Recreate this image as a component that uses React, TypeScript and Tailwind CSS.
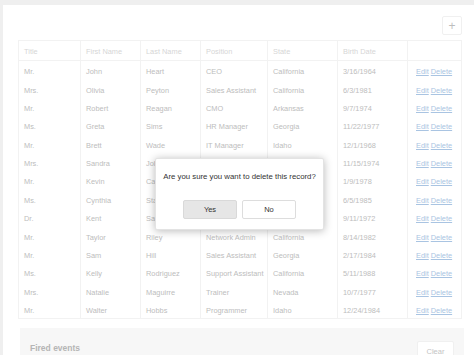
import {useState} from "react";

type Employee = {
  title: string;
  firstName: string;
  lastName: string;
  position: string;
  state: string;
  birthDate: string;
};

const employees: Employee[] = [
  {title: "Mr.", firstName: "John", lastName: "Heart", position: "CEO", state: "California", birthDate: "3/16/1964"},
  {title: "Mrs.", firstName: "Olivia", lastName: "Peyton", position: "Sales Assistant", state: "California", birthDate: "6/3/1981"},
  {title: "Mr.", firstName: "Robert", lastName: "Reagan", position: "CMO", state: "Arkansas", birthDate: "9/7/1974"},
  {title: "Ms.", firstName: "Greta", lastName: "Sims", position: "HR Manager", state: "Georgia", birthDate: "11/22/1977"},
  {title: "Mr.", firstName: "Brett", lastName: "Wade", position: "IT Manager", state: "Idaho", birthDate: "12/1/1968"},
  {title: "Mrs.", firstName: "Sandra", lastName: "Johnson", position: "Controller", state: "Utah", birthDate: "11/15/1974"},
  {title: "Mr.", firstName: "Kevin", lastName: "Carter", position: "Shipping Manager", state: "California", birthDate: "1/9/1978"},
  {title: "Ms.", firstName: "Cynthia", lastName: "Stanwick", position: "HR Assistant", state: "Arkansas", birthDate: "6/5/1985"},
  {title: "Dr.", firstName: "Kent", lastName: "Samuelson", position: "Ombudsman", state: "Missouri", birthDate: "9/11/1972"},
  {title: "Mr.", firstName: "Taylor", lastName: "Riley", position: "Network Admin", state: "California", birthDate: "8/14/1982"},
  {title: "Mr.", firstName: "Sam", lastName: "Hill", position: "Sales Assistant", state: "Georgia", birthDate: "2/17/1984"},
  {title: "Ms.", firstName: "Kelly", lastName: "Rodriguez", position: "Support Assistant", state: "California", birthDate: "5/11/1988"},
  {title: "Mrs.", firstName: "Natalie", lastName: "Maguirre", position: "Trainer", state: "Nevada", birthDate: "10/7/1977"},
  {title: "Mr.", firstName: "Walter", lastName: "Hobbs", position: "Programmer", state: "Idaho", birthDate: "12/24/1984"},
];

// 컬럼 폭 (px)
const columns = [
  {key: "title", caption: "Title", width: "w-[62px]"},
  {key: "firstName", caption: "First Name", width: "w-[60px]"},
  {key: "lastName", caption: "Last Name", width: "w-[60px]"},
  {key: "position", caption: "Position", width: "w-[67px]"},
  {key: "state", caption: "State", width: "w-[70px]"},
  {key: "birthDate", caption: "Birth Date", width: "w-[70px]"},
] as const;

// 모달이 열려 있어서 뒤쪽 화면은 흐리게 보인다
const ConfirmDialog = () => (
  <div className="absolute left-[155px] top-[158px] flex h-[72px] w-[169px] flex-col items-center rounded-[2px] border border-[#e3e3e3] bg-white shadow-[0_1px_8px_rgba(0,0,0,0.28)]">
    <p className="mt-[12px] text-[7.8px] text-[#333]">Are you sure you want to delete this record?</p>
    <div className="mt-[17px] flex gap-[5px]">
      <button className="h-[19px] w-[54px] rounded-[2px] border border-[#d9d9d9] bg-[#e6e6e6] text-[7.5px] text-[#333]">
        Yes
      </button>
      <button className="h-[19px] w-[54px] rounded-[2px] border border-[#ddd] bg-white text-[7.5px] text-[#333]">
        No
      </button>
    </div>
  </div>
);

export default function App() {
  const [rows] = useState(employees);

  return (
    <div className="relative h-[355px] w-[474px] overflow-hidden bg-[#efefef] pl-[3px] pt-[5px] font-['Liberation_Sans',Arial,sans-serif] antialiased">
      <div className="flex h-full flex-col bg-white px-[15px]">
        {/* 툴바 */}
        <div className="flex h-[35px] w-[444px] shrink-0 items-end justify-end pb-[5px]">
          <button className="flex h-[19px] w-[20px] items-center justify-center rounded-[2px] border border-[#f0f0f0] bg-white text-[12px] leading-none text-[#bdbdbd]">
            +
          </button>
        </div>

        {/* 그리드 */}
        <div className="w-[444px] shrink-0 border border-[#f2f2f2] text-[7.4px] text-[#bdbdbd]">
          <div className="flex h-[20px] border-b border-[#f2f2f2] text-[#d6d6d6]">
            {columns.map((c) => (
              <div key={c.key} className={`${c.width} flex items-center border-r border-[#f2f2f2] pl-[5px] pt-[3px]`}>
                {c.caption}
              </div>
            ))}
            <div className="flex-1" />
          </div>
          {rows.map((r, i) => (
            <div key={i} className="flex h-[18.4px]">
              {columns.map((c) => (
                <div key={c.key} className={`${c.width} flex items-center overflow-hidden whitespace-nowrap border-r border-[#f2f2f2] pl-[5px] pt-[3px]`}>
                  {r[c.key]}
                </div>
              ))}
              <div className="flex flex-1 items-center gap-[2px] pl-[8px] pt-[3px] text-[#a9c4e2] underline">
                <span>Edit</span>
                <span>Delete</span>
              </div>
            </div>
          ))}
        </div>

        {/* 이벤트 패널 */}
        <div className="ml-[2px] mt-[9px] flex h-[40px] w-[444px] shrink-0 items-start justify-between bg-[#f7f7f7] px-[10px] pt-[13px]">
          <span className="mt-[2px] text-[8.5px] leading-[11px] font-semibold text-[#b5b5b5]">Fired events</span>
          <button className="h-[20px] w-[37px] rounded-[2px] border border-[#f0f0f0] bg-white pt-[1px] text-[7.5px] text-[#c4c4c4]">
            Clear
          </button>
        </div>
      </div>

      <ConfirmDialog />
    </div>
  );
}
